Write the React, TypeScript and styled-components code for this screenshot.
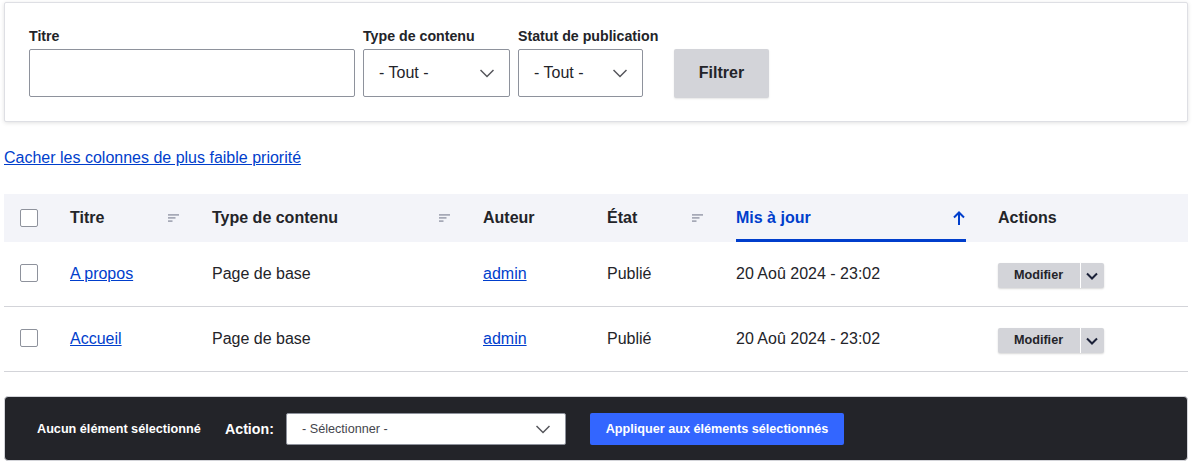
import styled, { createGlobalStyle } from "styled-components";

const GlobalStyle = createGlobalStyle`
  html, body {
    margin: 0;
    padding: 0;
    background: #fff;
  }
  body {
    font-family: "Liberation Sans", Arial, sans-serif;
    font-size: 16px;
    color: #232429;
  }
  * {
    box-sizing: border-box;
  }
`;

const Page = styled.div`
  width: 1192px;
  height: 462px;
  padding: 2px 4px 0;
  overflow: hidden;
`;

const FilterPanel = styled.form`
  display: flex;
  align-items: flex-start;
  gap: 8px;
  height: 120px;
  padding: 25px 24px 0;
  background: #fff;
  border: 1px solid #dedfe4;
  border-radius: 2px;
  box-shadow: 0 1px 4px rgba(0, 0, 0, 0.12);
`;

const Field = styled.div<{ $width: number }>`
  display: flex;
  flex-direction: column;
  width: ${(p) => p.$width}px;
`;

const FieldLabel = styled.label`
  height: 21px;
  font-size: 14.2px;
  line-height: 16px;
  font-weight: 700;
  white-space: nowrap;
`;

const TextInput = styled.input`
  width: 100%;
  height: 48px;
  border: 1px solid #8e929c;
  border-radius: 2px;
  background: #fff;
`;

const SelectBox = styled.div<{ $small?: boolean }>`
  display: flex;
  align-items: center;
  justify-content: space-between;
  width: 100%;
  height: ${(p) => (p.$small ? 32 : 48)}px;
  padding: 0 15px;
  font-size: ${(p) => (p.$small ? 12.65 : 16)}px;
  color: ${(p) => (p.$small ? "#44454d" : "#232429")};
  background: #fff;
  border: 1px solid #8e929c;
  border-radius: 2px;
  white-space: nowrap;
`;

const FilterButton = styled.button`
  width: 95px;
  height: 49px;
  margin: 21px 0 0 23px;
  padding: 0 0 2px;
  font-family: inherit;
  font-size: 16px;
  font-weight: 700;
  color: #232429;
  background: #d3d4d9;
  border: 0;
  border-radius: 2px;
  box-shadow: 0 1px 2px rgba(0, 0, 0, 0.1);
`;

const PriorityLink = styled.a`
  display: block;
  margin-top: 26px;
  height: 19px;
  line-height: 19px;
  font-size: 16px;
  color: #003ecc;
  text-decoration: underline;
`;

const Table = styled.table`
  width: 1184px;
  margin-top: 27px;
  table-layout: fixed;
  border-collapse: separate;
  border-spacing: 0;
`;

const HeadRow = styled.tr`
  height: 48px;
  background: #f3f4f9;
`;

const HeadCell = styled.th`
  height: 48px;
  padding: 0 16px;
  font-size: 16px;
  font-weight: 700;
  text-align: left;
  white-space: nowrap;
`;

const SortCell = styled.th`
  height: 48px;
  padding: 0 16px;
  font-size: 16px;
  text-align: left;
`;

const SortLabel = styled.div<{ $active?: boolean }>`
  display: flex;
  align-items: center;
  justify-content: space-between;
  height: 48px;
  padding-top: 3px;
  font-weight: 700;
  white-space: nowrap;
  color: ${(p) => (p.$active ? "#003ecc" : "#232429")};
  border-bottom: 3px solid ${(p) => (p.$active ? "#003ecc" : "transparent")};
`;

const SortGlyph = styled.svg`
  margin-right: 1px;
`;

const Row = styled.tr`
  height: 65px;
`;

const Cell = styled.td`
  padding: 0 16px 2px;
  font-size: 16px;
  line-height: 19px;
  white-space: nowrap;
  border-bottom: 1px solid #d3d4d9;
`;

const TableLink = styled.a`
  color: #003ecc;
  text-decoration: underline;
`;

const Check = styled.span`
  display: block;
  width: 18px;
  height: 18px;
  background: #fff;
  border: 1px solid #8e929c;
  border-radius: 2px;
`;

const Dropbutton = styled.div`
  display: flex;
  width: 106px;
  height: 25px;
  margin-top: 5px;
  border-radius: 2px;
  background: #d3d4d9;
  box-shadow: 0 1px 2px rgba(0, 0, 0, 0.16);
`;

const DropMain = styled.span`
  flex: 1;
  padding-right: 1px;
  font-size: 12.65px;
  font-weight: 700;
  line-height: 24px;
  text-align: center;
  border-right: 1px solid #fff;
`;

const DropToggle = styled.span`
  display: flex;
  align-items: center;
  justify-content: center;
  width: 23px;
  padding-right: 1px;
`;

const BulkBar = styled.div`
  display: flex;
  align-items: center;
  height: 65px;
  margin-top: 24px;
  padding: 1px 0 0 32px;
  color: #fff;
  background: #232429;
  border: 1px solid #d3d4d9;
  border-radius: 4px;
`;

const BulkCount = styled.span`
  width: 188px;
  font-size: 12.65px;
  font-weight: 700;
  white-space: nowrap;
`;

const BulkLabel = styled.span`
  width: 61px;
  font-size: 14.2px;
  font-weight: 700;
`;

const BulkSelect = styled.div`
  width: 280px;
`;

const BulkButton = styled.button`
  width: 254px;
  height: 32px;
  margin-left: 24px;
  padding: 0;
  font-family: inherit;
  font-size: 12.65px;
  font-weight: 700;
  color: #fff;
  background: #3366ff;
  border: 0;
  border-radius: 2px;
`;

const Chevron = () => (
  <svg width="14" height="9" viewBox="0 0 14 9" fill="none">
    <path d="M.5 1 7 7.500 13.500 1" stroke="#55565b" strokeWidth="1.500" />
  </svg>
);

const SortIcon = () => (
  <SortGlyph width="11" height="8" viewBox="0 0 11 8">
    <path d="M0 0h11v1.700H0zM0 3.100h7.500v1.700H0zM0 6.200h4.500v1.700H0z" fill="#a6a9b7" />
  </SortGlyph>
);

const ArrowUp = () => (
  <svg width="14" height="16" viewBox="0 0 14 16" fill="none">
    <path d="M7 15V2.500M2 7.500l5-5 5 5" stroke="#003ecc" strokeWidth="2" />
  </svg>
);

const SmallChevron = () => (
  <svg width="12" height="8" viewBox="0 0 12 8" fill="none">
    <path d="M1 1.500 6 6.500 11 1.500" stroke="#1b2138" strokeWidth="2" />
  </svg>
);

const rows = [
  { title: "A propos" },
  { title: "Accueil" },
];

const App = () => {
  return (
    <Page>
      <GlobalStyle />
      <FilterPanel>
        <Field $width={326}>
          <FieldLabel>Titre</FieldLabel>
          <TextInput type="text" />
        </Field>
        <Field $width={147}>
          <FieldLabel>Type de contenu</FieldLabel>
          <SelectBox>
            - Tout -
            <Chevron />
          </SelectBox>
        </Field>
        <Field $width={125}>
          <FieldLabel>Statut de publication</FieldLabel>
          <SelectBox>
            - Tout -
            <Chevron />
          </SelectBox>
        </Field>
        <FilterButton type="button">Filtrer</FilterButton>
      </FilterPanel>

      <PriorityLink href="#">Cacher les colonnes de plus faible priorité</PriorityLink>

      <Table>
        <colgroup>
          <col style={{ width: 50 }} />
          <col style={{ width: 142 }} />
          <col style={{ width: 271 }} />
          <col style={{ width: 124 }} />
          <col style={{ width: 129 }} />
          <col style={{ width: 262 }} />
          <col style={{ width: 206 }} />
        </colgroup>
        <thead>
          <HeadRow>
            <HeadCell>
              <Check />
            </HeadCell>
            <SortCell>
              <SortLabel>
                Titre
                <SortIcon />
              </SortLabel>
            </SortCell>
            <SortCell>
              <SortLabel>
                Type de contenu
                <SortIcon />
              </SortLabel>
            </SortCell>
            <HeadCell>Auteur</HeadCell>
            <SortCell>
              <SortLabel>
                État
                <SortIcon />
              </SortLabel>
            </SortCell>
            <SortCell>
              <SortLabel $active>
                Mis à jour
                <ArrowUp />
              </SortLabel>
            </SortCell>
            <HeadCell>Actions</HeadCell>
          </HeadRow>
        </thead>
        <tbody>
          {rows.map((row) => (
            <Row key={row.title}>
              <Cell>
                <Check />
              </Cell>
              <Cell>
                <TableLink href="#">{row.title}</TableLink>
              </Cell>
              <Cell>Page de base</Cell>
              <Cell>
                <TableLink href="#">admin</TableLink>
              </Cell>
              <Cell>Publié</Cell>
              <Cell>20 Aoû 2024 - 23:02</Cell>
              <Cell>
                <Dropbutton>
                  <DropMain>Modifier</DropMain>
                  <DropToggle>
                    <SmallChevron />
                  </DropToggle>
                </Dropbutton>
              </Cell>
            </Row>
          ))}
        </tbody>
      </Table>

      <BulkBar>
        <BulkCount>Aucun élément sélectionné</BulkCount>
        <BulkLabel>Action:</BulkLabel>
        <BulkSelect>
          <SelectBox $small>
            - Sélectionner -
            <Chevron />
          </SelectBox>
        </BulkSelect>
        <BulkButton type="button">Appliquer aux éléments sélectionnés</BulkButton>
      </BulkBar>
    </Page>
  );
};

export default App;
